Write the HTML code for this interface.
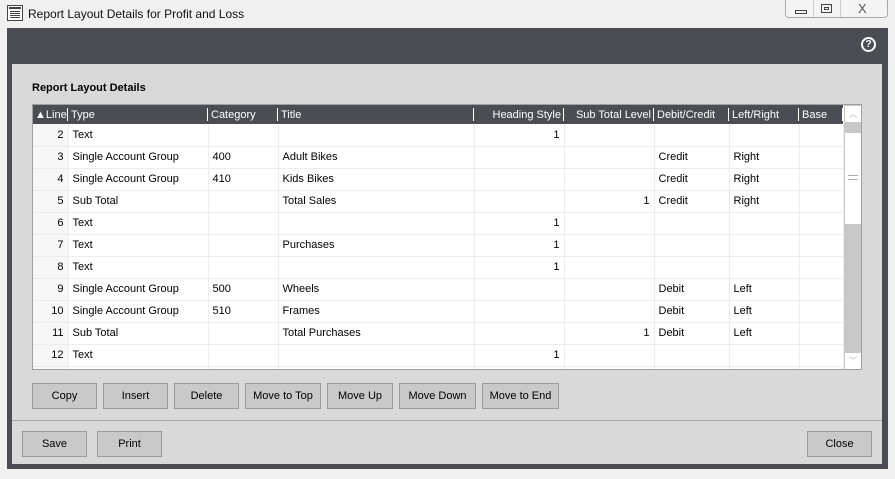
<!DOCTYPE html>
<html><head><style>
*{margin:0;padding:0;box-sizing:border-box}
body{width:895px;height:479px;background:#f0f0f0;font-family:"Liberation Sans",Arial,sans-serif;font-size:11px;color:#000;position:relative;overflow:hidden}
.abs{position:absolute}
.title{left:28px;top:7px;font-size:12px;color:#111}
.frame{left:7px;top:28px;width:881px;height:441px;background:#4c4d52}
.inner{left:12px;top:64px;width:870px;height:400px;background:#d9d9d9}
.grid{left:32px;top:104px;width:830px;height:266px;border:1px solid #a0a0a0;background:#fff;overflow:hidden}
table{border-collapse:collapse;table-layout:fixed;position:absolute;left:0;top:0;width:810px}
th{background:#4c4d52;color:#fff;font-weight:normal;height:19px;text-align:left;padding:0 3px;white-space:nowrap;position:relative;font-size:11px;overflow:hidden}
th:after{content:"";position:absolute;right:0;top:3px;height:13px;width:1px;background:#fff}
td{height:22px;border-right:1px solid #ececec;border-bottom:1px solid #ececec;padding:0 4px;white-space:nowrap;overflow:hidden}
td:first-child{background:#f7f7f7;text-align:right}
.r{text-align:right}
.btn{position:absolute;height:26px;background:#c9c9c9;border:1px solid #9a9a9a;text-align:center;line-height:24px;font-size:11px}
</style></head><body>
<svg class="abs" style="left:7px;top:5px" width="16" height="16"><rect x="0.5" y="0.5" width="15" height="15" fill="#fff" stroke="#444"/><rect x="2" y="2" width="12" height="2" fill="#444"/><path d="M3 6.5h10M3 8.5h10M3 10.5h10M3 12.5h10" stroke="#444"/></svg>
<div class="abs title">Report Layout Details for Profit and Loss</div>
<div class="abs" style="left:785px;top:0;width:103px;height:18px;border:1px solid #aaa;border-top:none;border-radius:0 0 4px 4px;background:#f4f4f4"></div>
<div class="abs" style="left:813px;top:0;width:1px;height:17px;background:#ccc"></div>
<div class="abs" style="left:840px;top:0;width:1px;height:17px;background:#ccc"></div>
<div class="abs" style="left:795px;top:10px;width:12px;height:4px;border:1px solid #444"></div>
<div class="abs" style="left:821px;top:4px;width:11px;height:9px;border:1px solid #444"></div>
<div class="abs" style="left:824px;top:7px;width:5px;height:3px;border:1px solid #444"></div>
<div class="abs" style="left:858px;top:1px;font-size:13px;color:#555">X</div>
<div class="abs frame"></div>
<div class="abs" style="left:861px;top:37px;width:15px;height:15px;border:2px solid #fff;border-radius:50%;color:#fff;font-weight:bold;font-size:10px;text-align:center;line-height:11px">?</div>
<div class="abs inner"></div>
<div class="abs" style="left:32px;top:82px;font-weight:bold;font-size:11px">Report Layout Details</div>
<div class="abs grid">
<table>
<colgroup><col style="width:35px"><col style="width:140px"><col style="width:70px"><col style="width:196px"><col style="width:90px"><col style="width:90px"><col style="width:75px"><col style="width:70px"><col style="width:44px"></colgroup>
<tr><th style="padding-left:2px">▲Line</th><th>Type</th><th>Category</th><th>Title</th><th class="r">Heading Style</th><th class="r">Sub Total Level</th><th>Debit/Credit</th><th>Left/Right</th><th>Base</th></tr>
<tr><td>2</td><td>Text</td><td></td><td></td><td class="r">1</td><td></td><td></td><td></td><td></td></tr>
<tr><td>3</td><td>Single Account Group</td><td>400</td><td>Adult Bikes</td><td></td><td></td><td>Credit</td><td>Right</td><td></td></tr>
<tr><td>4</td><td>Single Account Group</td><td>410</td><td>Kids Bikes</td><td></td><td></td><td>Credit</td><td>Right</td><td></td></tr>
<tr><td>5</td><td>Sub Total</td><td></td><td>Total Sales</td><td></td><td class="r">1</td><td>Credit</td><td>Right</td><td></td></tr>
<tr><td>6</td><td>Text</td><td></td><td></td><td class="r">1</td><td></td><td></td><td></td><td></td></tr>
<tr><td>7</td><td>Text</td><td></td><td>Purchases</td><td class="r">1</td><td></td><td></td><td></td><td></td></tr>
<tr><td>8</td><td>Text</td><td></td><td></td><td class="r">1</td><td></td><td></td><td></td><td></td></tr>
<tr><td>9</td><td>Single Account Group</td><td>500</td><td>Wheels</td><td></td><td></td><td>Debit</td><td>Left</td><td></td></tr>
<tr><td>10</td><td>Single Account Group</td><td>510</td><td>Frames</td><td></td><td></td><td>Debit</td><td>Left</td><td></td></tr>
<tr><td>11</td><td>Sub Total</td><td></td><td>Total Purchases</td><td></td><td class="r">1</td><td>Debit</td><td>Left</td><td></td></tr>
<tr><td>12</td><td>Text</td><td></td><td></td><td class="r">1</td><td></td><td></td><td></td><td></td></tr>
<tr><td></td><td></td><td></td><td></td><td></td><td></td><td></td><td></td><td></td></tr>
</table>
<div class="abs" style="left:811px;top:0;width:18px;height:264px;background:#c8c8c8"></div>
<div class="abs" style="left:812px;top:1px;width:16px;height:16px;background:#fff;color:#bbb;text-align:center;font-size:9px;line-height:16px">︿</div>
<div class="abs" style="left:812px;top:28px;width:16px;height:91px;background:#fff"></div>
<div class="abs" style="left:815px;top:70px;width:10px;height:5px;border-top:1px solid #aab;border-bottom:1px solid #aab"></div>
<div class="abs" style="left:812px;top:248px;width:16px;height:16px;background:#fff;color:#bbb;text-align:center;font-size:9px;line-height:16px">﹀</div>
</div>
<div class="btn" style="left:32px;top:383px;width:65px">Copy</div>
<div class="btn" style="left:103px;top:383px;width:65px">Insert</div>
<div class="btn" style="left:174px;top:383px;width:65px">Delete</div>
<div class="btn" style="left:245px;top:383px;width:76px">Move to Top</div>
<div class="btn" style="left:327px;top:383px;width:66px">Move Up</div>
<div class="btn" style="left:399px;top:383px;width:77px">Move Down</div>
<div class="btn" style="left:482px;top:383px;width:77px">Move to End</div>
<div class="abs" style="left:12px;top:420px;width:870px;height:1px;background:#a8a8a8"></div>
<div class="btn" style="left:22px;top:431px;width:65px">Save</div>
<div class="btn" style="left:97px;top:431px;width:65px">Print</div>
<div class="btn" style="left:807px;top:431px;width:65px">Close</div>
</body></html>
